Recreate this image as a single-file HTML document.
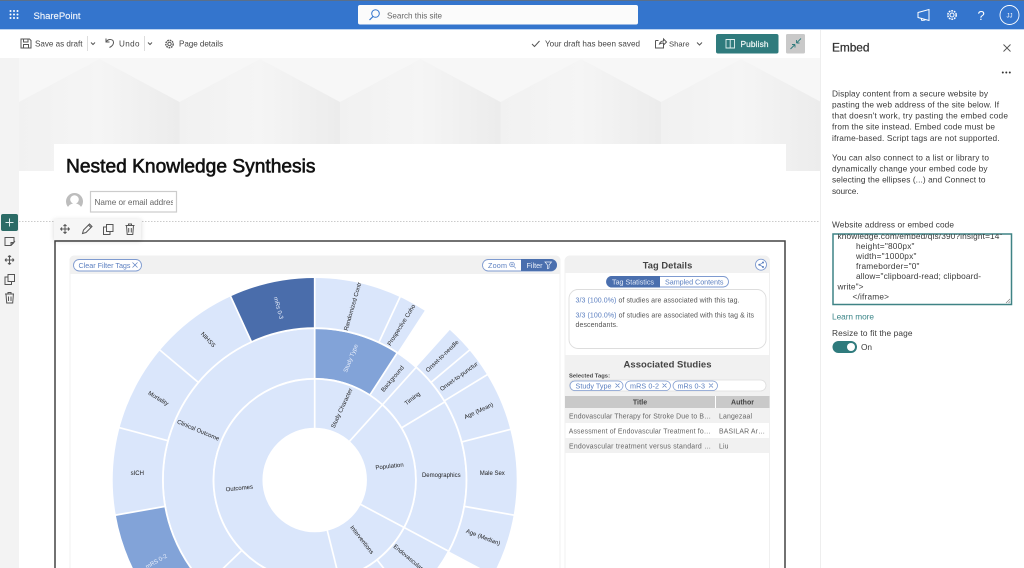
<!DOCTYPE html>
<html lang="en"><head><meta charset="utf-8"><title>Nested Knowledge Synthesis - SharePoint</title>
<style>
html,body{margin:0;padding:0;background:#fff;overflow:hidden;width:1024px;height:568px}
svg{display:block;filter:blur(.35px)}
text{font-family:"Liberation Sans",Arial,sans-serif;fill:#444;font-size:8.7px;white-space:pre}
.c{fill:#444;font-size:8.1px}
.p{fill:#3a3a3a;font-size:8.3px}
.s{font-size:6px;fill:#222;text-anchor:middle}
.w{font-size:6px;fill:#e8eefa;text-anchor:middle}
.b{fill:#5b7fc0;font-size:7.2px}
.t{fill:#666;font-size:6.9px}
.i{fill:none;stroke:#555;stroke-width:1}
.ic{fill:none;stroke:#fff;stroke-width:1}
.div path{stroke:#fff;stroke-width:1.7;fill:none}
</style></head><body>
<svg width="1024" height="568" viewBox="0 0 1024 568" xmlns="http://www.w3.org/2000/svg">
<defs>
<linearGradient id="hx" x1="0" x2="1" y1="0" y2="0"><stop offset="0" stop-color="#f1f1f1"/><stop offset=".5" stop-color="#f5f5f5"/><stop offset="1" stop-color="#ececec"/></linearGradient>
<filter id="sh" x="-10%" y="-30%" width="120%" height="170%"><feDropShadow dx="0" dy="1" stdDeviation="2.5" flood-color="#000" flood-opacity=".16"/></filter>
<clipPath id="inp"><rect x="92" y="192" width="81" height="19"/></clipPath>
<clipPath id="ta"><rect x="833" y="234" width="178" height="70"/></clipPath>
<clipPath id="page"><rect width="1024" height="568"/></clipPath>
</defs>
<g clip-path="url(#page)">
<rect width="1024" height="568" fill="#fff"/>

<!-- hero -->
<rect x="19" y="58" width="801" height="113" fill="#f7f7f7"/>
<g fill="url(#hx)">
<polygon points="19,102 99.5,59 179.5,102 179.5,171 19,171"/>
<polygon points="179.5,102 260,59 340,102 340,171 179.5,171"/>
<polygon points="340,102 420.5,59 500.5,102 500.5,171 340,171"/>
<polygon points="500.5,102 581,59 661,102 661,171 500.5,171"/>
<polygon points="661,102 741,59 821,102 821,171 661,171"/>
</g>
<rect x="54" y="144" width="732" height="60" fill="#fff"/>

<!-- left rail -->
<rect x="0" y="58" width="19" height="510" fill="#f3f3f3"/>
<rect x="1" y="214" width="17" height="17" rx="2" fill="#2b6b66"/>
<path d="M9.5 218.5v8M5.5 222.5h8" stroke="#dfeeee" stroke-width="1" fill="none"/>
<path class="i" d="M5 237.5h9v5l-3 3H5zM14 242.5l-3 0v3M11 245l4-4"/>
<path class="i" d="M9.5 255.5v9M5 260h9M9.5 255.5l-1.5 1.5M9.5 255.5l1.5 1.5M9.5 264.5l-1.5-1.5M9.5 264.5l1.5-1.5M5 260l1.5-1.5M5 260l1.5 1.5M14 260l-1.5-1.5M14 260l-1.5 1.5"/>
<path class="i" d="M8 274.5h6.5v7H8zM8 277H5v7.5h6.5V281.5"/>
<path class="i" d="M5 294h9M6 294l.7 9h6l.7-9M8 294v-1.5h3V294M8.5 296.5v4.5M11 296.5v4.5"/>

<!-- top bar -->
<rect width="1024" height="29" fill="#3475cd"/>
<rect width="1024" height="1" fill="#5a6f8a"/>
<rect y="29" width="1024" height="1" fill="#bcd3f0"/>
<g fill="#fff"><circle cx="10.5" cy="11" r="1"/><circle cx="14" cy="11" r="1"/><circle cx="17.5" cy="11" r="1"/><circle cx="10.5" cy="14.5" r="1"/><circle cx="14" cy="14.5" r="1"/><circle cx="17.5" cy="14.5" r="1"/><circle cx="10.5" cy="18" r="1"/><circle cx="14" cy="18" r="1"/><circle cx="17.5" cy="18" r="1"/></g>
<text x="33.5" y="19" textLength="47" style="fill:#f2f6fc;font-size:9.5px;stroke:#f2f6fc;stroke-width:.15">SharePoint</text>
<rect x="358" y="5" width="280" height="19.5" rx="2" fill="#fbfbfb"/>
<path d="M369.5 20l3.5-3.5" stroke="#3475cd" stroke-width="1.2" fill="none"/><circle cx="375.5" cy="13.5" r="3.8" fill="none" stroke="#3475cd" stroke-width="1"/>
<text x="387" y="18.5" textLength="55" style="fill:#666;font-size:8.1px">Search this site</text>
<path class="ic" d="M918 12.5l11-3v11l-11-3zM921 18l.8 2.5 3.5-.5"/>
<g class="ic"><circle cx="952" cy="15" r="2"/><circle cx="952" cy="15" r="4.2" stroke-width="1.5" stroke-dasharray="1.8 .9"/></g>
<text x="977.5" y="20" style="fill:#fff;font-size:13px">?</text>
<circle cx="1009.5" cy="15" r="9.5" fill="none" stroke="#fff" stroke-width=".9"/>
<text x="1009.5" y="17.3" text-anchor="middle" style="fill:#fff;font-size:6px">JJ</text>

<!-- command bar -->
<path class="i" d="M21 39h8.500l1.500 1.500v7.500H21zM23.500 39v3h4.500v-3M23.500 48v-3.500h5V48"/>
<text class="c" x="35" y="46.5" textLength="47.5">Save as draft</text>
<rect x="87" y="36" width="1" height="15" fill="#ddd"/>
<path class="i" d="M91 42.5l2 2 2-2" stroke-width=".7"/>
<path class="i" d="M106 38.5v3.5h3.5M106.5 41.5c2-3 7-2.5 7 1 0 2.5-2 4-4 5"/>
<text class="c" x="119" y="46.5" textLength="20.5">Undo</text>
<rect x="144" y="36" width="1" height="15" fill="#ddd"/>
<path class="i" d="M148 42.5l2 2 2-2" stroke-width=".7"/>
<g class="i"><circle cx="169.5" cy="44" r="1.7"/><circle cx="169.5" cy="44" r="3.7" stroke-width="1.4" stroke-dasharray="1.7 .8"/></g>
<text class="c" x="179" y="46.5" textLength="44">Page details</text>
<path class="i" d="M532 44l2.5 2.5 5-5.5"/>
<text class="c" x="545" y="46.5" textLength="95">Your draft has been saved</text>
<path class="i" d="M655.5 40.5h3M655.5 40.5v7.5h8v-3M659.5 44c.5-2 2-3 4-3v-2l3 3-3 3v-2c-1.5 0-3 .3-4 1z"/>
<text class="c" x="669" y="46.5" textLength="20.5" style="font-size:7.7px">Share</text>
<path class="i" d="M697 42.5l2.5 2.5 2.5-2.5" stroke-width=".7"/>
<rect x="716" y="34" width="62.5" height="19.5" rx="2" fill="#2f7b7d"/>
<path d="M726 39.5h8.5v8.5H726zM730.2 39.5v8.5" fill="none" stroke="#e2f0f0" stroke-width=".9"/>
<text x="740.5" y="47" textLength="28" style="fill:#f2f8f8;font-size:8.4px;stroke:#f2f8f8;stroke-width:.2">Publish</text>
<rect x="786" y="34" width="19" height="19.5" rx="1.5" fill="#c9c9c9"/>
<path d="M790.5 49l4.5-4.5M795 44.5h-3M795 44.5v3M801 38.5l-4.5 4.5M796.5 43h3M796.5 43v-3" fill="none" stroke="#2f7b7d" stroke-width=".9"/>

<!-- right panel -->
<rect x="820" y="30" width="204" height="538" fill="#fff"/>
<rect x="820" y="30" width="1" height="538" fill="#eee"/>
<text x="832" y="51.5" textLength="37.5" style="fill:#333;font-size:11.9px;stroke:#333;stroke-width:.25">Embed</text>
<path d="M1003.5 44.5l7 7M1010.5 44.5l-7 7" stroke="#555" stroke-width=".9" fill="none"/>
<g fill="#333"><circle cx="1002.8" cy="72.5" r="1"/><circle cx="1006.3" cy="72.5" r="1"/><circle cx="1009.8" cy="72.5" r="1"/></g>
<text class="p" x="832" y="96.4" textLength="156">Display content from a secure website by</text>
<text class="p" x="832" y="107.7" textLength="167">pasting the web address of the site below. If</text>
<text class="p" x="832" y="118.7" textLength="176">that doesn't work, try pasting the embed code</text>
<text class="p" x="832" y="129.7" textLength="163">from the site instead. Embed code must be</text>
<text class="p" x="832" y="140.8" textLength="167.5">iframe-based. Script tags are not supported.</text>
<text class="p" x="832" y="160.4" textLength="157">You can also connect to a list or library to</text>
<text class="p" x="832" y="171.5" textLength="155.5">dynamically change your embed code by</text>
<text class="p" x="832" y="182.7" textLength="153.5">selecting the ellipses (...) and Connect to</text>
<text class="p" x="832" y="193.8" textLength="26.5">source.</text>
<text class="p" x="832" y="227.5" textLength="122">Website address or embed code</text>
<rect x="833" y="234" width="178.5" height="70.5" fill="#fff" stroke="#3f8385" stroke-width="1.5"/>
<g clip-path="url(#ta)">
<text class="p" x="837.5" y="238.8" textLength="165">knowledge.com/embed/qls/390?insight=14"</text>
<text class="p" x="856" y="248.8" textLength="58.5">height="800px"</text>
<text class="p" x="856" y="258.8" textLength="60.5">width="1000px"</text>
<text class="p" x="856" y="269" textLength="63.5">frameborder="0"</text>
<text class="p" x="856" y="279.2" textLength="125">allow="clipboard-read; clipboard-</text>
<text class="p" x="837.5" y="289.4" textLength="26">write"&gt;</text>
<text class="p" x="852.5" y="299.7" textLength="36.5">&lt;/iframe&gt;</text>
</g>
<path d="M1006 303l4-4M1008.5 303l1.5-1.5" stroke="#777" stroke-width=".6" fill="none"/>
<text x="832" y="319.7" textLength="42" style="fill:#3b8588;font-size:8.3px">Learn more</text>
<text class="p" x="832" y="336" textLength="80.5">Resize to fit the page</text>
<rect x="832.5" y="341" width="24.5" height="12" rx="6" fill="#2f7b7d"/>
<circle cx="851" cy="347" r="4" fill="#fff"/>
<text class="p" x="861" y="350" textLength="11">On</text>

<!-- title -->
<text x="66" y="172.5" textLength="249.5" style="fill:#111;font-size:19.2px;stroke:#111;stroke-width:.6">Nested Knowledge Synthesis</text>
<circle cx="74.5" cy="201.5" r="8.5" fill="#bdbdbd"/>
<circle cx="74.5" cy="199.5" r="4.3" fill="#fff"/>
<path d="M67.5 208c1.5-3.5 4-4.5 7-4.5s5.5 1 7 4.5c-2 2-4.5 2.7-7 2.7s-5-.7-7-2.7z" fill="#fff"/>
<rect x="90.5" y="191.5" width="86" height="20.5" fill="#fff" stroke="#ccc" stroke-width="1.2"/>
<g clip-path="url(#inp)"><text x="94.5" y="205" textLength="84" style="fill:#666;font-size:8.2px">Name or email address</text></g>
<path d="M19 221.5H820" stroke="#bbb" stroke-width=".8" stroke-dasharray="1.5 1.5"/>

<!-- embed frame -->
<path d="M55 568V241H785V568" fill="#fff" stroke="#444" stroke-width="1.5"/>

<!-- toolbar -->
<rect x="54" y="219" width="87" height="21" fill="#f6f6f6" filter="url(#sh)"/>
<path class="i" d="M65 224.5v9M60.5 229h9M65 224.5l-1.5 1.5M65 224.5l1.5 1.5M65 233.5l-1.5-1.5M65 233.5l1.5-1.5M60.5 229l1.5-1.5M60.5 229l1.5 1.5M69.5 229l-1.5-1.5M69.5 229l-1.5 1.5"/>
<path class="i" d="M82.5 233.5l1-3.5 6-6 2.5 2.5-6 6zM88.5 225l2.5 2.5"/>
<path class="i" d="M106.5 224.5h6.5v7h-6.5zM106.5 227h-3v7.5h6.5v-3"/>
<path class="i" d="M125.5 225.5h9M126.5 225.5l.7 9h5.6l.7-9M128.5 225.5v-1.500h3v1.500M128.7 228v4.500M131.3 228v4.500"/>

<!-- chart panel -->
<path d="M70 568V260a4 4 0 0 1 4-4h482a4 4 0 0 1 4 4V568" fill="#fff" stroke="#f0f0f0" stroke-width="1"/>
<path d="M70 274v-14a4 4 0 0 1 4-4h482a4 4 0 0 1 4 4v14z" fill="#f1f1f1"/>
<rect x="73.5" y="259.5" width="68" height="11.5" rx="5.7" fill="#fff" stroke="#7f9bd0" stroke-width=".9"/>
<text class="b" x="78.5" y="268" textLength="52">Clear Filter Tags</text>
<path d="M132.5 262.5l5 5M137.5 262.5l-5 5" stroke="#5b7fc0" stroke-width=".7"/>
<rect x="482.5" y="259.5" width="74" height="11.5" rx="5.7" fill="#fff" stroke="#7f9bd0" stroke-width=".9"/>
<path d="M521 259h30a6 6 0 0 1 6 6 6 6 0 0 1-6 6h-30z" fill="#4a6fae"/>
<text class="b" x="488" y="268" textLength="19">Zoom</text>
<circle cx="512" cy="264.5" r="2.3" fill="none" stroke="#5b7fc0" stroke-width=".7"/>
<path d="M513.8 266.3l2 2M510.8 264.5h2.4M512 263.3v2.4" stroke="#5b7fc0" stroke-width=".6"/>
<text x="526.5" y="268" textLength="16" style="fill:#eaf0fa;font-size:7.2px">Filter</text>
<path d="M545 262h6.5l-2.5 3v3l-1.5 .7V265z" fill="none" stroke="#eaf0fa" stroke-width=".7"/>

<!-- sunburst -->
<g transform="translate(314.7 480)">
<circle r="76.5" fill="none" stroke="#dae6fb" stroke-width="48.5"/>
<circle r="126.5" fill="none" stroke="#dae6fb" stroke-width="49"/>
<path d="M0-126.5A126.5 126.5 0 0 1 68.9-106.1" fill="none" stroke="#82a3d8" stroke-width="49"/>
<g fill="none" stroke-width="50">
<path d="M0-177A177 177 0 0 1 96.4-148.4" stroke="#dae6fb"/>
<path d="M118.4-131.5A177 177 0 0 1 156.3 83.1" stroke="#dae6fb"/>
<path d="M-125.2 125.2A177 177 0 0 1 -174.3 30.7" stroke="#82a3d8"/>
<path d="M-174.3 30.7A177 177 0 0 1 -73.7-160.9" stroke="#dae6fb"/>
<path d="M-73.7-160.9A177 177 0 0 1 0-177" stroke="#4a6dab"/>
</g>
<g class="div">
<circle r="101.2" fill="none" stroke="#fff" stroke-width="1.8"/>
<path transform="rotate(0)" d="M0-52V-101"/><path transform="rotate(42)" d="M0-52V-101"/><path transform="rotate(118)" d="M0-52V-101"/><path transform="rotate(166)" d="M0-52V-101"/>
<path transform="rotate(0)" d="M0-101V-152"/><path transform="rotate(33)" d="M0-101V-152"/><path transform="rotate(42)" d="M0-101V-152"/><path transform="rotate(59)" d="M0-101V-152"/><path transform="rotate(118)" d="M0-101V-152"/><path transform="rotate(142)" d="M0-101V-152"/><path transform="rotate(166)" d="M0-101V-152"/><path transform="rotate(226)" d="M0-101V-152"/>
<circle r="151.8" fill="none" stroke="#fff" stroke-width="1.8"/>
<path transform="rotate(0)" d="M0-152V-203"/><path transform="rotate(25)" d="M0-152V-203"/><path transform="rotate(50)" d="M0-152V-203"/><path transform="rotate(58.6)" d="M0-152V-203"/><path transform="rotate(75.5)" d="M0-152V-203"/><path transform="rotate(100)" d="M0-152V-203"/><path transform="rotate(260)" d="M0-152V-203"/><path transform="rotate(285)" d="M0-152V-203"/><path transform="rotate(310)" d="M0-152V-203"/><path transform="rotate(335.4)" d="M0-152V-203"/>
</g>
</g>
<g>
<text class="w" transform="translate(276.7 308.5) rotate(75)">mRs 0-3</text>
<text class="s" transform="translate(206.7 341) rotate(47)">NIHSS</text>
<text class="s" transform="translate(157.3 400) rotate(31)">Mortality</text>
<text class="s" transform="translate(137.3 475)">sICH</text>
<text class="w" transform="translate(157.3 563) rotate(-30)">mRS 0-2</text>
<text class="s" transform="translate(197.5 432) rotate(23)">Clinical Outcome</text>
<text class="s" transform="translate(239.5 490) rotate(-6)">Outcomes</text>
<text class="s" transform="translate(354.5 307) rotate(-74)">Randomized Contr</text>
<text class="s" transform="translate(403 326) rotate(-58)">Prospective Coho</text>
<text class="w" transform="translate(352.5 359) rotate(-68)">Study Type</text>
<text class="s" transform="translate(394 380) rotate(-50)">Background</text>
<text class="s" transform="translate(343.5 409) rotate(-65)">Study Character</text>
<text class="s" transform="translate(443.5 357.5) rotate(-44)">Onset-to-needle</text>
<text class="s" transform="translate(460 378) rotate(-36)">Onset-to-punctur</text>
<text class="s" transform="translate(413.5 400) rotate(-38)">Timing</text>
<text class="s" transform="translate(479.5 412.5) rotate(-25)">Age (Mean)</text>
<text class="s" transform="translate(492.3 475)">Male Sex</text>
<text class="s" transform="translate(441.3 477)">Demographics</text>
<text class="s" transform="translate(389.7 468) rotate(-6)">Population</text>
<text class="s" transform="translate(482.5 539) rotate(21)">Age (Median)</text>
<text class="s" transform="translate(360.5 541) rotate(52)">Interventions</text>
<text class="s" x="0" y="0" style="text-anchor:start" transform="translate(393 547) rotate(40)">Endovascular</text>
</g>

<!-- tag panel -->
<path d="M565 568V261a5 5 0 0 1 5-5h194.5a5 5 0 0 1 5 5V568" fill="#fff" stroke="#f0f0f0" stroke-width="1"/>
<path d="M565 273v-12a5 5 0 0 1 5-5h194.5a5 5 0 0 1 5 5v12z" fill="#f1f1f1"/>
<text x="667.5" y="268.5" text-anchor="middle" textLength="49.5" style="fill:#444;font-size:9.3px;font-weight:700">Tag Details</text>
<circle cx="761" cy="264.7" r="5.5" fill="#fff" stroke="#7f9bd0" stroke-width=".9"/>
<path d="M763 262.5l-3.5 2.2 3.5 2.2" fill="none" stroke="#5b7fc0" stroke-width=".7"/>
<g fill="#5b7fc0"><circle cx="763" cy="262.5" r="1"/><circle cx="759.3" cy="264.7" r="1"/><circle cx="763" cy="267" r="1"/></g>
<rect x="606.5" y="276.5" width="122" height="10.5" rx="5.2" fill="#fff" stroke="#7f9bd0" stroke-width=".9"/>
<path d="M660 276h-48a5.5 5.5 0 0 0 0 11.5h48z" fill="#4a6fae"/>
<text x="612" y="284.5" textLength="42" style="fill:#dfe7f5;font-size:7.2px">Tag Statistics</text>
<text class="b" x="665" y="284.5" textLength="58.5">Sampled Contents</text>
<rect x="569" y="289.5" width="197" height="59" rx="9" fill="#fff" stroke="#ddd" stroke-width=".9"/>
<text x="575.5" y="302.7" textLength="164" style="font-size:7px"><tspan fill="#5b7fc0">3/3 (100.0%)</tspan><tspan fill="#555"> of studies are associated with this tag.</tspan></text>
<text x="575.5" y="317.7" textLength="178.5" style="font-size:7px"><tspan fill="#5b7fc0">3/3 (100.0%)</tspan><tspan fill="#555"> of studies are associated with this tag &amp; its</tspan></text>
<text x="575.5" y="327" textLength="42.5" style="fill:#555;font-size:7px">descendants.</text>
<rect x="565" y="355" width="204.5" height="41" fill="#f1f1f1"/>
<text x="667.5" y="367.5" text-anchor="middle" textLength="88" style="fill:#444;font-size:9.5px;font-weight:700">Associated Studies</text>
<text x="569" y="377.3" textLength="41" style="fill:#444;font-size:5.8px;font-weight:700">Selected Tags:</text>
<rect x="569.5" y="380" width="196.5" height="11" rx="5.5" fill="#fff" stroke="#ddd" stroke-width=".8"/>
<g fill="#fff" stroke="#7f9bd0" stroke-width=".8">
<rect x="570" y="381" width="53" height="9.5" rx="4.7"/><rect x="625.5" y="381" width="45" height="9.5" rx="4.7"/><rect x="673" y="381" width="44.5" height="9.5" rx="4.7"/>
</g>
<text class="b" x="575.5" y="388.5" textLength="36">Study Type</text>
<text class="b" x="630" y="388.5" textLength="29">mRS 0-2</text>
<text class="b" x="677.5" y="388.5" textLength="27.5">mRs 0-3</text>
<path d="M615.5 383.5l4 4M619.5 383.5l-4 4M662.5 383.5l4 4M666.5 383.5l-4 4M709 383.5l4 4M713 383.5l-4 4" stroke="#5b7fc0" stroke-width=".7"/>
<rect x="565" y="396" width="150" height="12" fill="#c9c9c9"/>
<rect x="716" y="396" width="53.5" height="12" fill="#c9c9c9"/>
<text x="640" y="404.5" text-anchor="middle" style="fill:#444;font-size:7px;font-weight:700">Title</text>
<text x="742.5" y="404.5" text-anchor="middle" style="fill:#444;font-size:7px;font-weight:700">Author</text>
<rect x="565" y="408" width="204.5" height="15" fill="#f1f1f1"/>
<rect x="565" y="438" width="204.5" height="15" fill="#f1f1f1"/>
<text class="t" x="569" y="418.7" textLength="142">Endovascular Therapy for Stroke Due to B…</text>
<text class="t" x="719" y="418.7" textLength="33">Langezaal</text>
<text class="t" x="568.7" y="433.7" textLength="142">Assessment of Endovascular Treatment fo…</text>
<text class="t" x="719" y="433.7" textLength="46">BASILAR Ar…</text>
<text class="t" x="569" y="448.7" textLength="142">Endovascular treatment versus standard …</text>
<text class="t" x="719" y="448.7" textLength="9.5">Liu</text>
</g>
</svg>
</body></html>
